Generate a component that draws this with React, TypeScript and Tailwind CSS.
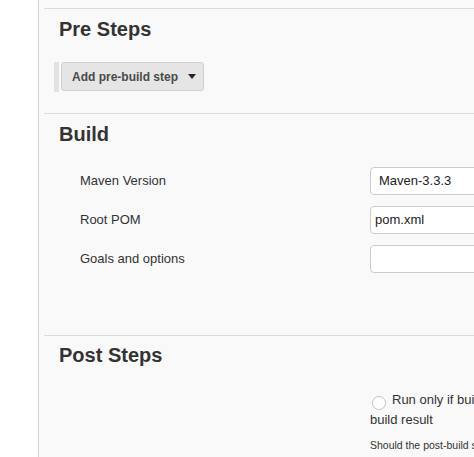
const font = { fontFamily: '"Liberation Sans", Arial, Helvetica, sans-serif' };

function SectionHeading({ children }: { children: React.ReactNode }) {
  return <h2 className="pl-[5px] text-[20px] font-bold leading-[24px] text-[#333]">{children}</h2>;
}

function FieldRow({ label, value, select }: { label: string; value?: string; select?: boolean }) {
  return (
    <div className="flex h-[28px] items-center">
      <div className="w-[316px] shrink-0 pl-[26px] text-[13px] text-[#333]">{label}</div>
      <div
        className={`flex h-[28px] w-[220px] shrink-0 items-center rounded-[4px] border border-[#ccc] bg-white text-[13px] text-[#222] ${
          select ? 'pl-[8px]' : 'pl-[4px]'
        }`}
      >
        {value}
      </div>
    </div>
  );
}

function Radio({ label }: { label: string }) {
  return (
    <span className="mr-[10px] inline-flex items-center whitespace-nowrap">
      <span className="ml-[2px] mr-[6px] inline-block h-[14px] w-[14px] translate-y-[3px] rounded-full border border-[#c4c4c4] bg-white" />
      {label}
    </span>
  );
}

export default function App() {
  return (
    <div className="flex h-[457px] w-[474px] overflow-hidden bg-white" style={font}>
      <div className="w-[38px] shrink-0 bg-white" />
      <div className="min-w-0 flex-1 overflow-hidden border-l border-[#d3d3d3] bg-[#f9f9f9] pl-[5px] pt-[8px]">
        {/* Pre Steps */}
        <section className="h-[105px] border-t border-[#dcdcdc] pl-[10px] pt-[8px]">
          <SectionHeading>Pre Steps</SectionHeading>
          <div className="mt-[21px] flex">
            <div className="h-[30px] w-[5px] bg-[#e2e2e2]" />
            <button className="ml-[2px] flex h-[29px] w-[143px] items-center rounded-[3px] border border-[#d0d0d0] bg-[#e5e5e5] pl-[10px] text-[12px] font-bold text-[#4a4a4a]">
              Add pre-build step
              <svg className="ml-[10px]" width="8" height="5" viewBox="0 0 8 5">
                <path d="M0 0h8L4 5z" fill="#222" />
              </svg>
            </button>
          </div>
        </section>

        {/* Build */}
        <section className="h-[222px] border-t border-[#dcdcdc] pl-[10px] pt-[8px]">
          <SectionHeading>Build</SectionHeading>
          <div className="mt-[21px] flex flex-col gap-[11px]">
            <FieldRow label="Maven Version" value="Maven-3.3.3" select />
            <FieldRow label="Root POM" value="pom.xml" />
            <FieldRow label="Goals and options" />
          </div>
        </section>

        {/* Post Steps */}
        <section className="border-t border-[#dcdcdc] pl-[10px] pt-[7px]">
          <SectionHeading>Post Steps</SectionHeading>
          <div className="mt-[24px] pl-[316px] text-[13px] leading-[17px] text-[#333]">
            <div className="whitespace-nowrap">
              <Radio label="Run only if build succeeds" />
              <Radio label="Run only if build succeeds or is unstable" />
            </div>
            <div>build result</div>
            <div className="mt-[10px] whitespace-nowrap text-[10.5px] leading-[14px] text-[#333]">
              Should the post-build steps run only for successful builds, etc.
            </div>
          </div>
        </section>
      </div>
    </div>
  );
}
